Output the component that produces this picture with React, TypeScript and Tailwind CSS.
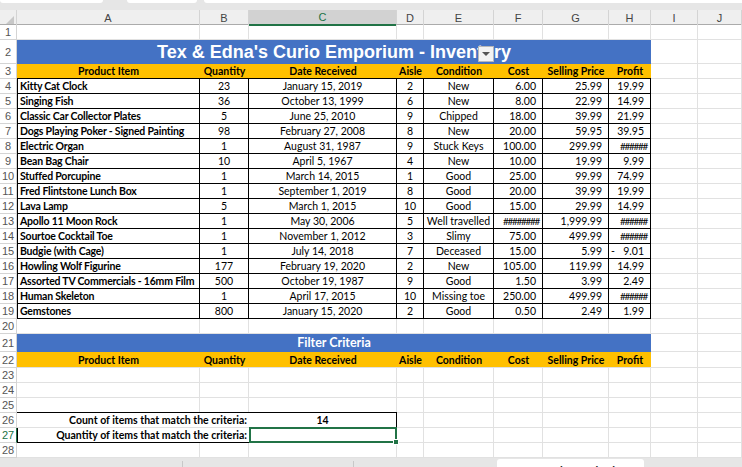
const COLS =
  "grid grid-cols-[17px_183px_49px_148px_27px_70px_49px_66px_42px_47px_1fr]";
const G = "border-r border-b border-[#e1e1e1]";
const BK = "border-r border-b border-black";

type Item = [string, string, string, string, string, string, string, string];

const items: Item[] = [
  ["Kitty Cat Clock", "23", "January 15, 2019", "2", "New", "6.00", "25.99", "19.99"],
  ["Singing Fish", "36", "October 13, 1999", "6", "New", "8.00", "22.99", "14.99"],
  ["Classic Car Collector Plates", "5", "June 25, 2010", "9", "Chipped", "18.00", "39.99", "21.99"],
  ["Dogs Playing Poker - Signed Painting", "98", "February 27, 2008", "8", "New", "20.00", "59.95", "39.95"],
  ["Electric Organ", "1", "August 31, 1987", "9", "Stuck Keys", "100.00", "299.99", "#"],
  ["Bean Bag Chair", "10", "April 5, 1967", "4", "New", "10.00", "19.99", "9.99"],
  ["Stuffed Porcupine", "1", "March 14, 2015", "1", "Good", "25.00", "99.99", "74.99"],
  ["Fred Flintstone Lunch Box", "1", "September 1, 2019", "8", "Good", "20.00", "39.99", "19.99"],
  ["Lava Lamp", "5", "March 1, 2015", "10", "Good", "15.00", "29.99", "14.99"],
  ["Apollo 11 Moon Rock", "1", "May 30, 2006", "5", "Well travelled", "#", "1,999.99", "#"],
  ["Sourtoe Cocktail Toe", "1", "November 1, 2012", "3", "Slimy", "75.00", "499.99", "#"],
  ["Budgie (with Cage)", "1", "July 14, 2018", "7", "Deceased", "15.00", "5.99", "-9.01"],
  ["Howling Wolf Figurine", "177", "February 19, 2020", "2", "New", "105.00", "119.99", "14.99"],
  ["Assorted TV Commercials - 16mm Film", "500", "October 19, 1987", "9", "Good", "1.50", "3.99", "2.49"],
  ["Human Skeleton", "1", "April 17, 2015", "10", "Missing toe", "250.00", "499.99", "#"],
  ["Gemstones", "800", "January 15, 2020", "2", "Good", "0.50", "2.49", "1.99"],
];

const headings = ["Product Item", "Quantity", "Date Received", "Aisle", "Condition", "Cost", "Selling Price", "Profit"];

function Row({
  n,
  h = "h-[15px]",
  active = false,
  children,
}: {
  n: number;
  h?: string;
  active?: boolean;
  children: React.ReactNode;
}) {
  return (
    <div className={`${COLS} ${h}`}>
      <div
        className={`border-b border-r border-[#d4d4d4] bg-white flex items-center justify-center font-['Liberation_Sans',Arial,sans-serif] text-[11px] ${
          active ? "text-[#217346] border-r-[#217346]" : "text-[#555]"
        }`}
      >
        {n}
      </div>
      {children}
    </div>
  );
}

function Blank({ count, cls = G }: { count: number; cls?: string }) {
  return (
    <>
      {Array.from({ length: count }).map((_, i) => (
        <div key={i} className={cls} />
      ))}
    </>
  );
}

// numbers too wide for the column show as hash marks, like Excel does
function Money({ v, wide = false }: { v: string; wide?: boolean }) {
  if (v === "#") {
    return (
      <div className={`${BK} flex items-center justify-end pr-[3px] overflow-hidden`}>
        <span className="text-[10px] tracking-[-1.3px] leading-none">
          {wide ? "########" : "######"}
        </span>
      </div>
    );
  }
  if (v.startsWith("-")) {
    return (
      <div className={`${BK} flex justify-between pl-[2px] pr-[6px]`}>
        <span>-</span>
        <span>{v.slice(1)}</span>
      </div>
    );
  }
  return <div className={`${BK} text-right pr-[6px]`}>{v}</div>;
}

function HeadingRow({ n, h }: { n: number; h: string }) {
  return (
    <Row n={n} h={h}>
      {headings.map((t) => (
        <div
          key={t}
          className={`bg-[#ffc000] font-bold text-center whitespace-nowrap flex items-center justify-center ${
            n === 3 ? "border-b border-black" : "border-b border-[#e1e1e1]"
          }`}
        >
          {t}
        </div>
      ))}
      <Blank count={2} />
    </Row>
  );
}

export default function App() {
  const cols = ["A", "B", "C", "D", "E", "F", "G", "H", "I", "J"];

  return (
    <div className="w-[742px] h-[467px] overflow-hidden bg-white flex flex-col font-['Lato',sans-serif] text-[10.5px] leading-[14px] text-black">
      {/* formula bar strip */}
      <div className="h-[10px] shrink-0 bg-[#e6e6e6] flex gap-0">
        <div className="w-[103px] h-[3px] bg-white rounded-b-[3px]" />
        <div className="w-[70px] h-[3px] bg-white rounded-b-[3px] ml-[24px]" />
        <div className="flex-1 h-[3px] bg-white rounded-bl-[3px] ml-[7px]" />
      </div>

      {/* column headers */}
      <div className={`${COLS} h-[15px] shrink-0 bg-[#efefef] border-b border-[#ababab] font-['Liberation_Sans',Arial,sans-serif] text-[11px] text-[#444]`}>
        <div className="relative border-r border-[#d4d4d4]">
          <div className="absolute right-[2px] bottom-[2px] w-0 h-0 border-l-[8px] border-l-transparent border-b-[8px] border-b-[#c8c8c8]" />
        </div>
        {cols.map((c) =>
          c === "C" ? (
            <div
              key={c}
              className="bg-[#d2d2d2] text-[#217346] border-b-2 border-[#217346] border-r border-r-[#d4d4d4] flex items-center justify-center"
            >
              {c}
            </div>
          ) : (
            <div key={c} className="border-r border-[#d4d4d4] flex items-center justify-center">
              {c}
            </div>
          )
        )}
      </div>

      <Row n={1}>
        <Blank count={10} />
      </Row>

      <Row n={2} h="h-[24px]">
        <div className="col-span-8 bg-[#4472c4] relative flex items-center justify-center text-white font-bold text-[18px] font-['Liberation_Sans',Arial,sans-serif] whitespace-nowrap">
          Tex &amp; Edna's Curio Emporium - Inventory
          <div className="absolute left-[461px] top-[6px] w-[16px] h-[16px] bg-[#f3f3f3] border border-[#b8b8b8] flex items-center justify-center">
            <div className="w-0 h-0 border-l-[4px] border-r-[4px] border-t-[4px] border-l-transparent border-r-transparent border-t-[#555]" />
          </div>
        </div>
        <Blank count={2} />
      </Row>

      <HeadingRow n={3} h="h-[15px]" />

      {items.map((r, i) => (
        <Row key={r[0]} n={i + 4}>
          <div className={`${BK} border-l font-bold pl-[2px] tracking-[-0.2px] whitespace-nowrap overflow-hidden`}>{r[0]}</div>
          <div className={`${BK} text-center`}>{r[1]}</div>
          <div className={`${BK} text-center`}>{r[2]}</div>
          <div className={`${BK} text-center`}>{r[3]}</div>
          <div className={`${BK} text-center whitespace-nowrap overflow-hidden`}>{r[4]}</div>
          <Money v={r[5]} wide />
          <div className={`${BK} text-right pr-[6px]`}>{r[6]}</div>
          <Money v={r[7]} />
          <Blank count={2} />
        </Row>
      ))}

      <Row n={20}>
        <Blank count={10} />
      </Row>

      <Row n={21} h="h-[18px]">
        <div className="col-span-8 bg-[#4472c4] flex items-center justify-center text-white font-bold text-[12.5px]">
          Filter Criteria
        </div>
        <Blank count={2} />
      </Row>

      <HeadingRow n={22} h="h-[16px]" />

      {[23, 24, 25].map((n) => (
        <Row key={n} n={n}>
          <Blank count={10} />
        </Row>
      ))}

      <Row n={26}>
        <div className="col-span-2 border-t border-black border-b border-b-[#e1e1e1] font-bold text-right pr-[2px] -mt-px">
          Count of items that match the criteria:
        </div>
        <div className="border-t border-r border-black border-b border-b-[#e1e1e1] font-bold text-center -mt-px">14</div>
        <Blank count={7} />
      </Row>

      <Row n={27} active>
        <div className="col-span-2 border-l border-b border-black font-bold text-right pr-[2px]">
          Quantity of items that match the criteria:
        </div>
        <div className="relative border-2 border-[#217346] -mt-px">
          <div className="absolute -right-[4px] -bottom-[4px] w-[6px] h-[6px] bg-[#217346] border border-white" />
        </div>
        <Blank count={7} />
      </Row>

      <Row n={28}>
        <Blank count={10} />
      </Row>

      {/* sheet tabs */}
      <div className="flex-1 bg-[#e6e6e6] relative overflow-hidden">
        <div className="absolute left-[182px] top-[3px] bottom-0 w-px bg-[#c8c8c8]" />
        <div className="absolute left-[353px] top-[3px] bottom-0 w-px bg-[#c8c8c8]" />
        <div className="absolute left-[497px] top-[1px] w-[147px] h-[20px] bg-white rounded-t-[3px] text-center pt-[5px] font-bold text-[11px] text-[#222]">
          Tex &amp; Edna's Criteria
        </div>
      </div>
    </div>
  );
}
